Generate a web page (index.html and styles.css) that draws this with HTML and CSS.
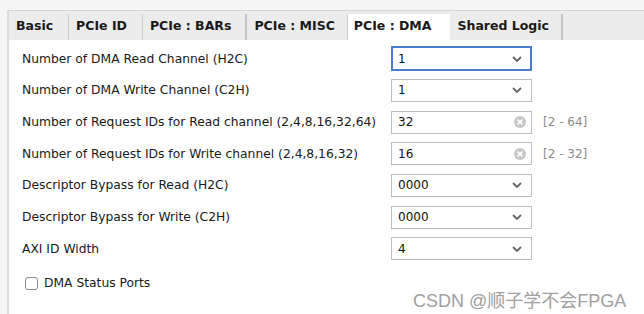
FILE: index.html
```html
<!DOCTYPE html>
<html>
<head>
<meta charset="utf-8">
<link rel="stylesheet" href="styles.css">
</head>
<body>
<div class="panel">
  <div class="tabs">
    <div class="tab">Basic</div>
    <div class="tab">PCIe ID</div>
    <div class="tab sep-dark">PCIe : BARs</div>
    <div class="tab">PCIe : MISC</div>
    <div class="tab active">PCIe : DMA</div>
    <div class="tab sep-dark">Shared Logic</div>
  </div>
  <div class="body">
    <div class="row">
      <div class="label">Number of DMA Read Channel (H2C)</div>
      <div class="field focus"><span>1</span><svg class="chev" width="10" height="6" viewBox="0 0 10 6"><path d="M1 1 L5 5 L9 1" fill="none" stroke="#666" stroke-width="1.8"/></svg></div>
    </div>
    <div class="row">
      <div class="label">Number of DMA Write Channel (C2H)</div>
      <div class="field"><span>1</span><svg class="chev" width="10" height="6" viewBox="0 0 10 6"><path d="M1 1 L5 5 L9 1" fill="none" stroke="#666" stroke-width="1.8"/></svg></div>
    </div>
    <div class="row">
      <div class="label">Number of Request IDs for Read channel (2,4,8,16,32,64)</div>
      <div class="field"><span>32</span><svg class="clear" width="12" height="12" viewBox="0 0 12 12"><circle cx="6" cy="6" r="6" fill="#c8c8c8"/><path d="M3.6 3.6 L8.4 8.4 M8.4 3.6 L3.6 8.4" stroke="#fff" stroke-width="1.6"/></svg></div>
      <div class="range">[2 - 64]</div>
    </div>
    <div class="row">
      <div class="label">Number of Request IDs for Write channel (2,4,8,16,32)</div>
      <div class="field"><span>16</span><svg class="clear" width="12" height="12" viewBox="0 0 12 12"><circle cx="6" cy="6" r="6" fill="#c8c8c8"/><path d="M3.6 3.6 L8.4 8.4 M8.4 3.6 L3.6 8.4" stroke="#fff" stroke-width="1.6"/></svg></div>
      <div class="range">[2 - 32]</div>
    </div>
    <div class="row">
      <div class="label">Descriptor Bypass for Read (H2C)</div>
      <div class="field"><span>0000</span><svg class="chev" width="10" height="6" viewBox="0 0 10 6"><path d="M1 1 L5 5 L9 1" fill="none" stroke="#666" stroke-width="1.8"/></svg></div>
    </div>
    <div class="row">
      <div class="label">Descriptor Bypass for Write (C2H)</div>
      <div class="field"><span>0000</span><svg class="chev" width="10" height="6" viewBox="0 0 10 6"><path d="M1 1 L5 5 L9 1" fill="none" stroke="#666" stroke-width="1.8"/></svg></div>
    </div>
    <div class="row">
      <div class="label">AXI ID Width</div>
      <div class="field"><span>4</span><svg class="chev" width="10" height="6" viewBox="0 0 10 6"><path d="M1 1 L5 5 L9 1" fill="none" stroke="#666" stroke-width="1.8"/></svg></div>
    </div>
    <div class="check-row">
      <span class="box"></span>
      <span class="label">DMA Status Ports</span>
    </div>
  </div>
  <div class="watermark">CSDN @顺子学不会FPGA</div>
</div>
</body>
</html>
```
FILE: styles.css
```css
html, body {
  margin: 0;
  padding: 0;
  background: #f5f5f5;
  width: 644px;
  height: 314px;
  overflow: hidden;
}
.panel {
  position: relative;
  margin: 10px 0 0 7px;
  border-top: 1px solid #d6d6d6;
  border-left: 2px solid #dcdcdc;
  background: #ffffff;
  height: 304px;
  font-family: "DejaVu Sans", sans-serif;
  color: #1a1a1a;
}
.tabs {
  display: flex;
  height: 29px;
  background: #ececec;
  align-items: stretch;
}
.tab {
  font-weight: bold;
  font-size: 12.5px;
  padding: 0 15px 3px 7px;
  display: flex;
  align-items: center;
  border-right: 1px solid #cfcfcf;
  margin-top: 3px;
}
.tab:nth-child(3) { padding-right: 14px; }
.tab:nth-child(4) { padding-right: 12px; }
.tab.sep-dark { border-right: 2px solid #c4c4c4; }
.tab.active {
  background: #ffffff;
  border-right: none;
  padding: 0 19px 3px 6px;
}
.tab:last-child { padding-right: 12px; }
.body {
  padding: 3px 0 0 13px;
}
.row {
  display: flex;
  align-items: center;
  height: 31.65px;
}
.label {
  font-size: 12.3px;
  width: 369px;
  color: #1a1a1a;
}
.field {
  box-sizing: border-box;
  width: 141px;
  height: 23px;
  border: 1px solid #bdbdbd;
  display: flex;
  align-items: center;
  justify-content: space-between;
  padding: 0 9px 0 6px;
  font-size: 12px;
  color: #111;
}
.field.focus {
  border: 2px solid #4a7cd0;
  padding: 0 8px 0 5px;
  height: 25px;
}
.field .clear { margin-right: -4px; }
.range {
  margin-left: 11px;
  font-size: 12px;
  color: #8c8c8c;
}
.check-row {
  display: flex;
  align-items: center;
  height: 38px;
  padding-left: 3px;
}
.box {
  box-sizing: border-box;
  width: 13px;
  height: 13px;
  border: 1.5px solid #8a8a8a;
  border-radius: 3px;
  margin-right: 6px;
}
.check-row .label { width: auto; }
.watermark {
  position: absolute;
  left: 404px;
  top: 275px;
  font-family: "Liberation Sans", "Noto Sans CJK SC", sans-serif;
  font-size: 18px;
  color: #a0a0a0;
}
```
